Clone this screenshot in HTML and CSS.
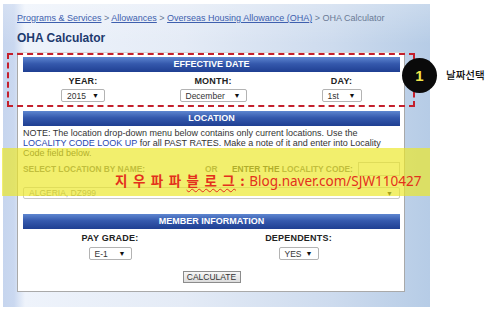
FILE: index.html
```html
<!DOCTYPE html>
<html>
<head>
<meta charset="utf-8">
<link rel="stylesheet" href="styles.css">
</head>
<body>
<div class="page">
  <div class="panel">
    <div class="crumbs"><a>Programs &amp; Services</a> &gt; <a>Allowances</a> &gt; <a>Overseas Housing Allowance (OHA)</a> &gt; OHA Calculator</div>
    <h1 class="title">OHA Calculator</h1>
    <div class="form">
      <div class="bar">EFFECTIVE DATE</div>
      <div class="cols3">
        <div class="field"><div class="lbl">YEAR:</div><div class="sel w44"><span>2015</span><i>▼</i></div></div>
        <div class="field"><div class="lbl">MONTH:</div><div class="sel w67"><span>December</span><i>▼</i></div></div>
        <div class="field"><div class="lbl">DAY:</div><div class="sel w40"><span>1st</span><i>▼</i></div></div>
      </div>
      <div class="bar bar-loc">LOCATION</div>
      <p class="note">NOTE: The location drop-down menu below contains only current locations. Use the <a>LOCALITY CODE LOOK UP</a> for all PAST RATES. Make a note of it and enter into Locality Code field below.</p>
      <div class="locrow">
        <span class="l1">SELECT LOCATION BY NAME:</span>
        <span class="or">OR</span>
        <span class="l2"><b>ENTER THE</b> LOCALITY CODE:</span>
        <span class="code"></span>
      </div>
      <div class="sel wide"><span>ALGERIA, DZ999</span><i>▼</i></div>
      <div class="bar bar-mem">MEMBER INFORMATION</div>
      <div class="cols2">
        <div class="field"><div class="lbl">PAY GRADE:</div><div class="sel w43"><span>E-1</span><i>▼</i></div></div>
        <div class="field"><div class="lbl">DEPENDENTS:</div><div class="sel w40"><span>YES</span><i>▼</i></div></div>
      </div>
      <div class="btnrow"><span class="btn">CALCULATE</span></div>
    </div>
  </div>
  <div class="dash"></div>
  <div class="badge">1</div>
  <div class="anno">날짜선택</div>
  <div class="hilite"></div>
  <div class="mark"><span class="ko">지 우 파 파 <u>블 로 그</u> :</span> Blog.naver.com/SJW110427</div>
</div>
</body>
</html>
```

FILE: styles.css
```css
* { box-sizing: border-box; }
html, body { margin: 0; padding: 0; background: #fff; }
body { font-family: "Liberation Sans", Arial, sans-serif; color: #333; }
.page { position: relative; width: 503px; height: 310px; overflow: hidden; }

.panel {
  margin: 4px 0 0 3px;
  width: 427px;
  height: 303px;
  padding: 9px 0 0 14px;
  background:
    linear-gradient(to bottom, rgba(255,255,255,0.25), rgba(255,255,255,0) 40px),
    linear-gradient(to right, #c6d5ee 0px, #cad8f0 11px, #eef3fb 22px, #e4ebf6 180px, #cddbee 330px, #b6cce6 427px);
}
.crumbs { font-size: 9px; line-height: 10px; color: #6a7a95; white-space: nowrap; }
.crumbs a { color: #3e5fae; text-decoration: underline; }
.title { margin: 8px 0 0 0; font-size: 12px; line-height: 14px; font-weight: bold; color: #1d3a6e; }

.form {
  margin-top: 7px;
  width: 388px;
  background: #fff;
  border: 1px solid #a9a9a9;
  border-top-color: #d8d8d8;
  padding: 4px 4px 8px 5px;
}
.bar {
  height: 15px;
  line-height: 15px;
  text-align: center;
  color: #fff;
  font-size: 9px;
  font-weight: bold;
  background: linear-gradient(to bottom, #5e86d0 0%, #3559ad 45%, #1f3f92 100%);
}
.bar-loc { margin-top: 9px; }
.bar-mem { margin-top: 15px; }

.cols3 { display: grid; grid-template-columns: 120px 140px 117px; margin-top: 4px; }
.cols2 { display: grid; grid-template-columns: 174px 1fr; margin-top: 4px; }
.field { display: flex; flex-direction: column; align-items: center; }
.lbl { font-size: 9px; line-height: 10px; font-weight: bold; color: #222; letter-spacing: 0.2px; }
.cols3 .sel, .cols2 .sel { margin-top: 3px; }
.cols2 .sel { margin-top: 4px; }

.sel {
  display: flex;
  align-items: center;
  justify-content: space-between;
  height: 13px;
  padding: 0 5px 0 5px;
  border: 1px solid #b3b3b3;
  border-radius: 2px;
  background: #fff;
  font-size: 8.5px;
  color: #333;
}
.sel i { font-style: normal; font-size: 7px; color: #111; }
.w44 { width: 44px; }
.w67 { width: 67px; }
.w40 { width: 40px; }
.w43 { width: 43px; }

.note { margin: 2px 0 0 0; padding-right: 6px; font-size: 9px; line-height: 10px; color: #333; }
.note a { color: #2747b0; }

.locrow { display: flex; align-items: center; height: 14px; margin-top: 4px; font-size: 8.4px; color: #666; font-weight: bold; white-space: nowrap; }
.l1 { width: 182px; }
.or { width: 27px; }
.l2 b { color: #333; }
.code { margin-left: auto; width: 42px; height: 14px; border: 1px solid #c5c5c5; background: #fff; }

.wide { margin-top: 11px; height: 12px; width: 377px; padding: 0 6px 0 5px; color: #888; border-color: #c8c8c8; }

.btnrow { display: flex; justify-content: center; margin-top: 11px; }
.btn {
  display: block;
  width: 58px;
  height: 12px;
  line-height: 10px;
  text-align: center;
  font-size: 8.5px;
  color: #333;
  border: 1px solid #8c8c8c;
  background: linear-gradient(#f7f7f7, #dcdcdc);
}

.dash {
  position: absolute;
  left: 7px; top: 53px;
  width: 408px; height: 54px;
  border: 2px dashed #c4202c;
}
.badge {
  position: absolute;
  left: 402px; top: 58px;
  width: 35px; height: 35px;
  border-radius: 50%;
  background: #0a0a0a;
  color: #f1e64a;
  font-size: 15px;
  font-weight: bold;
  text-align: center;
  line-height: 35px;
}
.anno {
  position: absolute;
  left: 446px; top: 68px;
  font-family: "Noto Sans CJK KR", sans-serif;
  font-size: 10.5px;
  line-height: 14px;
  font-weight: 500;
  color: #111;
}
.hilite {
  position: absolute;
  left: 2px; top: 148px;
  width: 428px; height: 48px;
  background: rgba(236, 232, 40, 0.68);
}
.mark {
  position: absolute;
  left: 115px; top: 172px;
  font-family: "Noto Sans", "Noto Sans CJK KR", sans-serif;
  font-size: 13.5px;
  line-height: 16px;
  color: #e3301c;
  white-space: nowrap;
}
.mark .ko { font-family: "Noto Sans CJK KR", sans-serif; font-weight: bold; font-size: 13.5px; letter-spacing: 1.2px; }
.mark u { text-decoration: underline wavy #e3301c; text-decoration-thickness: 1px; text-underline-offset: 2px; }
```
